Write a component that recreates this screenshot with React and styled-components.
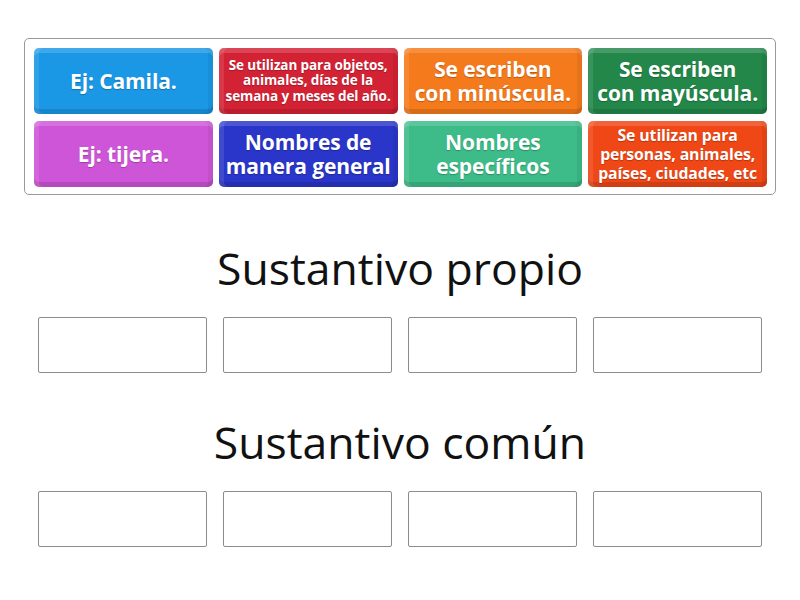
import styled, { createGlobalStyle } from 'styled-components'

const GlobalStyle = createGlobalStyle`
    html, body {
        margin: 0;
        padding: 0;
        background: #ffffff;
    }
    body {
        font-family: "Open Sans", "Noto Sans", sans-serif;
    }
`

const tiles = [
    { text: 'Ej: Camila.', color: '#1a98e6', size: 'lg' },
    { text: 'Se utilizan para objetos, animales, días de la semana y meses del año.', color: '#d42235', size: 'sm' },
    { text: 'Se escriben\ncon minúscula.', color: '#f57a1c', size: 'lg' },
    { text: 'Se escriben\ncon mayúscula.', color: '#23874a', size: 'lg' },
    { text: 'Ej: tijera.', color: '#cf55d8', size: 'lg' },
    { text: 'Nombres de\nmanera general', color: '#2a36c9', size: 'lg' },
    { text: 'Nombres\nespecíficos', color: '#3dbb88', size: 'lg' },
    { text: 'Se utilizan para personas, animales, países, ciudades, etc', color: '#ef4716', size: 'md' },
]

const groups = ['Sustantivo propio', 'Sustantivo común']

function App() {
    return (
        <Page>
            <GlobalStyle />
            <Bank>
                {tiles.map((tile, index) => (
                    <Tile key={index} $color={tile.color} $size={tile.size}>
                        {tile.text}
                    </Tile>
                ))}
            </Bank>

            {groups.map((title) => (
                <Group key={title}>
                    <GroupTitle>{title}</GroupTitle>
                    <Slots>
                        {[0, 1, 2, 3].map((i) => (
                            <Slot key={i} />
                        ))}
                    </Slots>
                </Group>
            ))}
        </Page>
    )
}

const Page = styled.div`
    width: 800px;
    height: 600px;
    padding-top: 38px;
    box-sizing: border-box;
    display: flex;
    flex-direction: column;
    align-items: center;
`

const Bank = styled.div`
    width: 752px;
    box-sizing: border-box;
    border: 1px solid #9a9a9a;
    border-radius: 5px;
    padding: 9px 8px 7px 9px;

    display: grid;
    grid-template-columns: repeat(4, 1fr);
    column-gap: 6px;
    row-gap: 7px;
`

const fontSizes = {
    lg: '21px',
    md: '15.8px',
    sm: '13.5px',
}

const lineHeights = {
    lg: '24px',
    md: '19px',
    sm: '15.5px',
}

const Tile = styled.div`
    height: 66px;
    box-sizing: border-box;
    border-radius: 5px;
    background-color: ${(p) => p.$color};
    box-shadow:
        inset 0 5px 0 rgba(255, 255, 255, 0.16),
        inset 5px 0 0 rgba(255, 255, 255, 0.1),
        inset -5px 0 0 rgba(0, 0, 0, 0.06),
        inset 0 -5px 0 rgba(0, 0, 0, 0.12);
    padding: 0 2px;

    display: flex;
    align-items: center;
    justify-content: center;
    text-align: center;
    white-space: pre-line;

    color: #ffffff;
    font-weight: 700;
    font-size: ${(p) => fontSizes[p.$size]};
    line-height: ${(p) => lineHeights[p.$size]};
    letter-spacing: -0.1px;
    text-shadow: 0 1px 1px rgba(0, 0, 0, 0.25);
`

const Group = styled.div`
    display: flex;
    flex-direction: column;
    align-items: center;
    margin-top: 43px;

    & + & {
        margin-top: 39px;
    }
`

const GroupTitle = styled.div`
    font-size: 44.5px;
    line-height: 60px;
    color: #111111;
    font-weight: 400;
`

const Slots = styled.div`
    margin-top: 19px;
    display: grid;
    grid-template-columns: repeat(4, 169px);
    column-gap: 16px;
`

const Slot = styled.div`
    height: 56px;
    box-sizing: border-box;
    border: 1px solid #8c8c8c;
    border-radius: 2px;
    background: #ffffff;
`

export default App
